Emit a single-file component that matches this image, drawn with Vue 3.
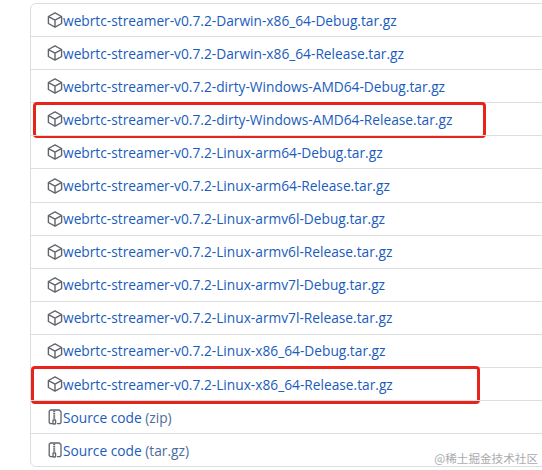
<script setup>
const pkg = [
  ['webrtc-streamer-v0.7.2-Darwin-x86_64-Debug.tar.gz'],
  ['webrtc-streamer-v0.7.2-Darwin-x86_64-Release.tar.gz'],
  ['webrtc-streamer-v0.7.2-dirty-Windows-AMD64-Debug.tar.gz'],
  ['webrtc-streamer-v0.7.2-dirty-Windows-AMD64-Release.tar.gz', 'mark-a'],
  ['webrtc-streamer-v0.7.2-Linux-arm64-Debug.tar.gz'],
  ['webrtc-streamer-v0.7.2-Linux-arm64-Release.tar.gz'],
  ['webrtc-streamer-v0.7.2-Linux-armv6l-Debug.tar.gz'],
  ['webrtc-streamer-v0.7.2-Linux-armv6l-Release.tar.gz'],
  ['webrtc-streamer-v0.7.2-Linux-armv7l-Debug.tar.gz'],
  ['webrtc-streamer-v0.7.2-Linux-armv7l-Release.tar.gz'],
  ['webrtc-streamer-v0.7.2-Linux-x86_64-Debug.tar.gz'],
  ['webrtc-streamer-v0.7.2-Linux-x86_64-Release.tar.gz', 'mark-b'],
]
const src = ['zip', 'tar.gz']
</script>

<template>
  <div class="page">
    <ul class="list">
      <li v-for="p in pkg" :key="p[0]" class="row">
        <svg class="icon" viewBox="0 0 16 16" fill="none" stroke="#60656b" stroke-width="1.4" stroke-linejoin="round">
          <path d="M8 .9 14.6 4.5v7L8 15.1 1.4 11.5v-7Z" />
          <path d="M1.6 4.6 8 8.2l6.4-3.6M8 8.2v6.7" />
        </svg>
        <span class="name">{{ p[0] }}</span>
        <i v-if="p[1]" class="mark" :class="p[1]"></i>
      </li>
      <li v-for="s in src" :key="s" class="row">
        <svg class="icon" viewBox="0 0 16 16" fill="none" stroke="#60656b" stroke-width="1.3" stroke-linejoin="round">
          <path d="M5 1h7.2L14 2.8v10.7l-1.2 1.2H10M6 14.7H3.4L2.2 13.5V2.2L3.4 1H5" />
          <path d="M6.2 2.5h2M6.2 4.7h2M6.2 6.9h2M6.2 9.1h2" stroke-width="1.5" />
          <rect x="6" y="11" width="2.6" height="4" rx=".5" />
        </svg>
        <span class="name">Source code</span><span class="kind">&nbsp;({{ s }})</span>
      </li>
    </ul>
    <span class="mark-text">@稀土掘金技术社区</span>
  </div>
</template>

<style scoped>
.page {
  position: relative;
  width: 542px;
  height: 470px;
  overflow: hidden;
  background: #fff;
  padding: 3px 0 0 30px;
  box-sizing: border-box;
  font-family: "Open Sans", "Noto Sans", sans-serif;
}
.list {
  list-style: none;
  margin: 0;
  padding: 0;
  width: 560px;
  box-sizing: border-box;
  border: 1px solid #dcdee0;
  border-radius: 6px;
}
.row {
  position: relative;
  display: flex;
  align-items: center;
  height: 33.1px;
  box-sizing: border-box;
  padding-left: 16px;
  border-top: 1px solid #dcdee0;
  font-size: 13.74px;
  white-space: nowrap;
}
.row:first-child { border-top: 0; height: 32.1px; }
.icon { width: 16px; height: 16px; flex: none; }
.name { color: #1a5cbc; }
.kind { color: #4a6c9c; }
.mark {
  position: absolute;
  border: 3.5px solid #e8231a;
  border-radius: 4px;
  box-sizing: border-box;
}
.mark-a { left: 2px; top: -1px; width: 453px; height: 36px; }
.mark-b { left: 0; top: -2px; width: 449px; height: 38px; }
.mark-text {
  position: absolute;
  right: 4px;
  top: 450px;
  font-size: 11.6px;
  color: #a9abad;
  font-family: "Noto Sans CJK SC", sans-serif;
}
</style>
